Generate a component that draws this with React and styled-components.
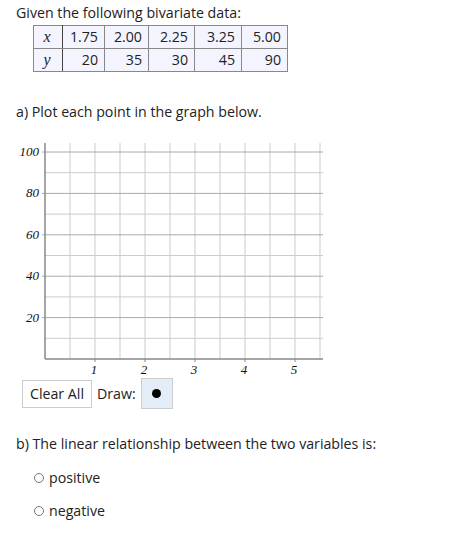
import React from 'react';
import styled, {createGlobalStyle} from 'styled-components';

const GlobalStyle = createGlobalStyle`
  body {
    margin: 0;
    background: #fff;
    font-family: "Open Sans", "Noto Sans", sans-serif;
    color: #222;
  }
`;

const Page = styled.div`
  width: 468px;
  height: 537px;
  padding: 3px 16px 0 16px;
  box-sizing: border-box;
  font-size: 14.2px;
`;

const Line = styled.p`
  margin: ${p => p.$m || '0'};
  line-height: 20px;
`;

const DataTable = styled.table`
  border-collapse: collapse;
  margin: 2px 0 0 17px;
  border: 1px solid #000;
  background: #f4f4ff;
`;

const Cell = styled.td`
  height: 23px;
  padding: 0 6px 0 4px;
  border: 1px solid #888;
  text-align: right;
  width: ${p => p.$w}px;
  box-sizing: border-box;
  line-height: 20px;
`;

const VarCell = styled(Cell)`
  text-align: center;
  font-family: "Liberation Serif", serif;
  font-style: italic;
  font-size: 16px;
  border-right: 1px solid #444;
`;

const Graph = styled.svg`
  display: block;
  margin: 15px 0 0 -16px;
`;

const Controls = styled.div`
  display: flex;
  align-items: center;
  gap: 5px;
  margin: 1px 0 0 6px;
`;

const Button = styled.button`
  font: inherit;
  color: #222;
  padding: 0 7px;
  border: 1px solid #ccc;
  background: ${p => (p.$active ? '#e3edf8' : '#fff')};
  display: flex;
  align-items: center;
  justify-content: center;
  width: ${p => (p.$w ? p.$w + 'px' : 'auto')};
  height: ${p => p.$h || 28}px;
`;

const Dot = styled.span`
  width: 9px;
  height: 9px;
  border-radius: 50%;
  background: #000;
`;

const Options = styled.div`
  display: flex;
  flex-direction: column;
  gap: 13px;
  margin: 14px 0 0 18px;
`;

const Option = styled.label`
  display: flex;
  align-items: center;
  gap: 5px;
  line-height: 20px;
`;

const Radio = styled.span`
  width: 8px;
  height: 8px;
  border: 1px solid #777;
  border-radius: 50%;
`;

const xs = ['1.75', '2.00', '2.25', '3.25', '5.00'];
const ys = ['20', '35', '30', '45', '90'];
const widths = [42, 44, 46, 47, 46];

const X0 = 45, Y0 = 222, SX = 50, SY = 2.07, TOP = 6, RIGHT = 323;
const px = x => X0 + SX * x;
const py = y => Y0 - SY * y;

function Plot() {
  const vlines = [];
  for (let i = 1; i <= 11; i++) vlines.push(px(i * 0.5));
  const hlines = [];
  for (let j = 1; j <= 10; j++) hlines.push(j * 10);
  return (
    <Graph width="340" height="240" viewBox="0 0 340 240">
      {vlines.map(x => (
        <line key={x} x1={x} x2={x} y1={TOP} y2={Y0} stroke="#ddd" strokeWidth="1.5"/>
      ))}
      {hlines.map(v => (
        <line key={v} x1={X0 - (v % 20 === 0 ? 3 : 0)} x2={RIGHT} y1={py(v)} y2={py(v)}
              stroke={v % 20 === 0 ? '#aaa' : '#ccc'} strokeWidth="1"/>
      ))}
      {[1, 2, 3, 4, 5].map(i => (
        <line key={i} x1={px(i)} x2={px(i)} y1={Y0} y2={Y0 + 3} stroke="#888"/>
      ))}
      <line x1={X0} x2={X0} y1={TOP} y2={Y0} stroke="#888" strokeWidth="1.5"/>
      <line x1={X0} x2={RIGHT} y1={Y0} y2={Y0} stroke="#888" strokeWidth="1.5"/>
      {[20, 40, 60, 80, 100].map(v => (
        <text key={v} x={X0 - 6} y={py(v) + 4} textAnchor="end" fontFamily="Liberation Serif, serif"
              fontStyle="italic" fontSize="13" fill="#111">{v}</text>
      ))}
      {[1, 2, 3, 4, 5].map(i => (
        <text key={i} x={px(i) - 1} y={Y0 + 15} textAnchor="middle" fontFamily="Liberation Serif, serif"
              fontStyle="italic" fontSize="13" fill="#111">{i}</text>
      ))}
    </Graph>
  );
}

export default function App() {
  return (
    <Page>
      <GlobalStyle/>
      <Line>Given the following bivariate data:</Line>
      <DataTable>
        <tbody>
          <tr>
            <VarCell $w={29}>x</VarCell>
            {xs.map((v, i) => <Cell key={v} $w={widths[i]}>{v}</Cell>)}
          </tr>
          <tr>
            <VarCell $w={29}>y</VarCell>
            {ys.map((v, i) => <Cell key={i} $w={widths[i]}>{v}</Cell>)}
          </tr>
        </tbody>
      </DataTable>
      <Line $m="30px 0 0 0">a) Plot each point in the graph below.</Line>
      <Plot/>
      <Controls>
        <Button>Clear All</Button>
        <span>Draw:</span>
        <Button $active $w={32} $h={31}><Dot/></Button>
      </Controls>
      <Line $m="25px 0 0 0">b) The linear relationship between the two variables is:</Line>
      <Options>
        <Option><Radio/>positive</Option>
        <Option><Radio/>negative</Option>
      </Options>
    </Page>
  );
}
